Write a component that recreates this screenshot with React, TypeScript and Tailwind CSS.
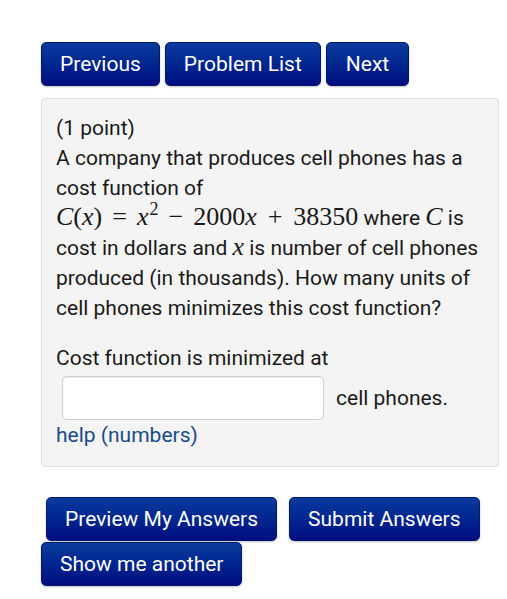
const btn =
  "h-[44px] px-[18px] rounded-[5px] border border-[#001a6e] bg-gradient-to-b from-[#0c3a9e] to-[#000a80] text-white text-[21px] leading-none shadow-[0_1px_2px_rgba(0,0,0,0.25)]";

const serif = "font-['Liberation_Serif','DejaVu_Serif',serif] text-[26px] leading-[20px]";

export default function App() {
  return (
    <div className="min-h-[599px] w-[507px] bg-white font-['Roboto',sans-serif] text-[#1a1a1a]">
      <div className="pl-[41px] pr-[8px] pt-[42px]">
        <div className="flex gap-[5px]">
          <button className={btn}>Previous</button>
          <button className={btn}>Problem List</button>
          <button className={`${btn} px-[19px]`}>Next</button>
        </div>

        <div className="mt-[12px] w-[458px] rounded-[4px] border border-[#dedede] bg-[#f4f4f4] px-[14px] pt-[14px] pb-[16px] text-[21px] leading-[30px]">
          <p>(1 point)</p>
          <p>
            A company that produces cell phones has a cost function of{" "}
            <span className={`${serif} inline-block whitespace-nowrap`}>
              <i>C</i>(<i>x</i>)<span className="mx-[10px]">=</span>
              <i>x</i>
              <span className="relative -top-[10px] ml-[1px] text-[18px]">2</span>
              <span className="mx-[10px]">−</span>2000<i>x</i>
              <span className="mx-[11px]">+</span>38350
            </span>{" "}
            where <i className={serif}>C</i> is cost in dollars and <i className={serif}>x</i> is
            number of cell phones produced (in thousands). How many units of cell phones minimizes
            this cost function?
          </p>
          <p className="mt-[20px]">Cost function is minimized at</p>
          <div className="mt-[3px] flex items-center gap-[12px] pl-[6px]">
            <input
              type="text"
              className="h-[44px] w-[262px] rounded-[5px] border border-[#cfcfcf] bg-white px-2 shadow-[inset_0_1px_1px_rgba(0,0,0,0.08)]"
            />
            <span>cell phones.</span>
          </div>
          <a className="block text-[#1b4a8a]">help (numbers)</a>
        </div>

        <div className="mt-[30px] flex gap-[12px] pl-[5px]">
          <button className={btn}>Preview My Answers</button>
          <button className={btn}>Submit Answers</button>
        </div>
        <div className="mt-[1px] flex">
          <button className={btn}>Show me another</button>
        </div>
      </div>
    </div>
  );
}
